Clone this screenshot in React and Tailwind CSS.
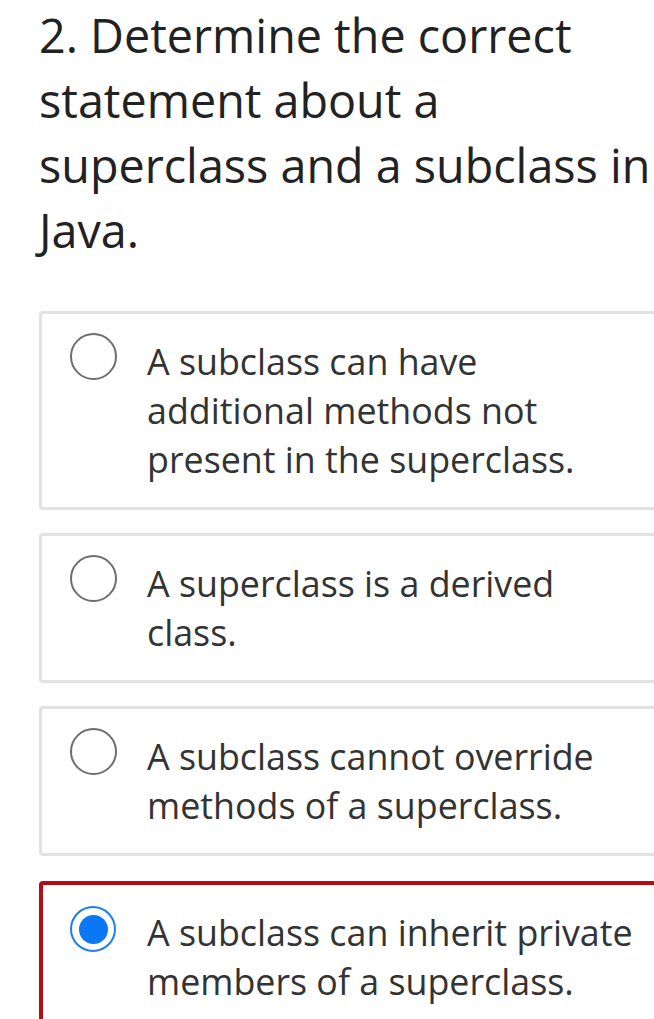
import React from 'react';

const options = [
  { id: 'a', text: 'A subclass can have additional methods not present in the superclass.' },
  { id: 'b', text: 'A superclass is a derived class.' },
  { id: 'c', text: 'A subclass cannot override methods of a superclass.' },
  { id: 'd', text: 'A subclass can inherit private members of a superclass.' },
];

function Radio({ checked }) {
  if (checked) {
    return (
      <span className="grid h-[46px] w-[46px] shrink-0 place-items-center rounded-full border-[2px] border-[#1a7ff0] bg-white">
        <span className="h-[29px] w-[29px] rounded-full bg-[#0a77f5]" />
      </span>
    );
  }
  return <span className="h-[47px] w-[47px] shrink-0 rounded-full border-[2px] border-[#6e6e6e] bg-white" />;
}

export default function App() {
  const [selected, setSelected] = React.useState('d');

  return (
    <div
      className="h-[1019px] w-[654px] overflow-hidden bg-white"
      style={{ fontFamily: '"Open Sans", "Noto Sans", sans-serif' }}
    >
      <h1 className="w-[665px] pl-[39px] pt-[3px] text-[46.7px] font-normal leading-[65px] text-[#222222]">
        2. Determine the correct statement about a superclass and a subclass in Java.
      </h1>

      <div className="mt-[48px] ml-[39px] flex w-[720px] flex-col gap-[23px]">
        {options.map((o) => {
          const on = selected === o.id;
          return (
            <button
              key={o.id}
              onClick={() => setSelected(o.id)}
              className={`flex items-start rounded-[4px] bg-white text-left ${
                on
                  ? 'mt-[2px] border-[4px] border-[#b30d17] pl-[27px] pt-[21px] pb-[23px]'
                  : 'border-[3px] border-[#e2e2e2] pl-[28px] pt-[19px] pb-[23px]'
              }`}
            >
              <Radio checked={on} />
              <span
                className={`${on ? 'ml-[31px] mt-[2px]' : 'ml-[30px] mt-[4px]'} w-[495px] text-[35.8px] leading-[49px] text-[#333333]`}
              >
                {o.text}
              </span>
            </button>
          );
        })}
      </div>
    </div>
  );
}
